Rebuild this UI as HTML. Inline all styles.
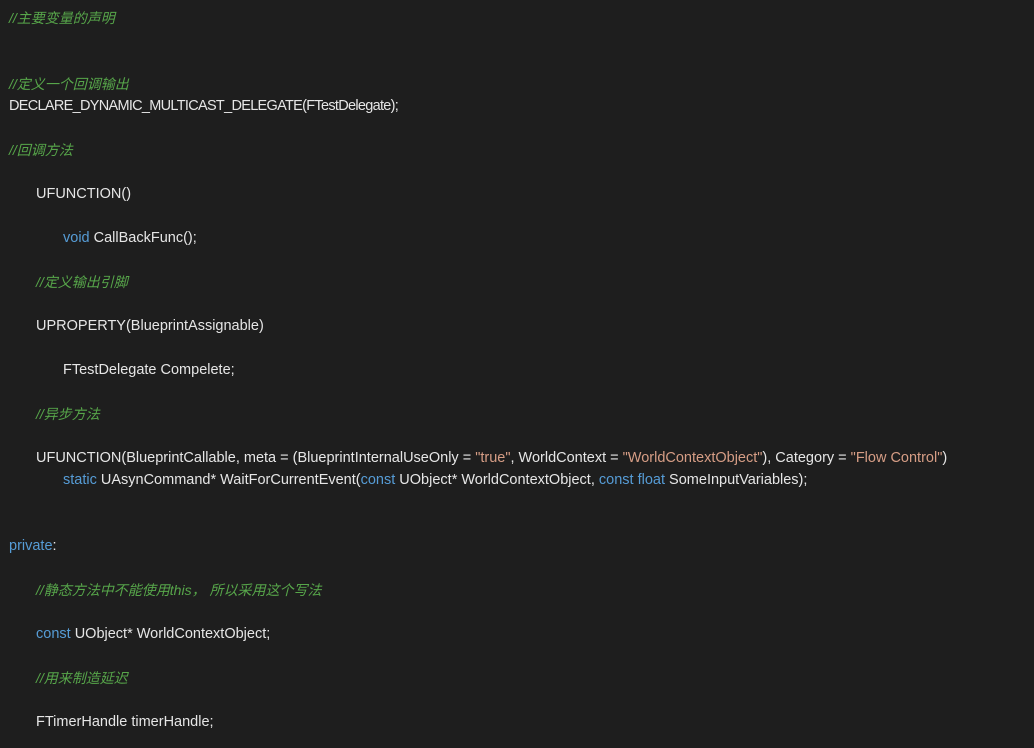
<!DOCTYPE html>
<html><head><meta charset="utf-8"><style>
html,body{margin:0;padding:0;background:#1e1e1e;width:1034px;height:748px;overflow:hidden}
.w{padding:7px 0 0 9px;font-family:"Liberation Sans","Noto Sans CJK SC",sans-serif;font-size:14.5px;color:#e6e6e6}
.w div{height:22px;line-height:22px;overflow:visible;white-space:pre}
.c{color:#57a64a;font-style:italic;font-size:14px}
.k{color:#569cd6}
.s{color:#d69d85}
.i1{padding-left:27px}
.i2{padding-left:54px}
.u{letter-spacing:-0.7px}
</style></head><body><div class="w">
<div><span class="c">//主要变量的声明</span></div>
<div></div>
<div></div>
<div><span class="c">//定义一个回调输出</span></div>
<div class="u">DECLARE_DYNAMIC_MULTICAST_DELEGATE(FTestDelegate);</div>
<div></div>
<div><span class="c">//回调方法</span></div>
<div></div>
<div class="i1">UFUNCTION()</div>
<div></div>
<div class="i2"><span class="k">void</span> CallBackFunc();</div>
<div></div>
<div class="i1"><span class="c">//定义输出引脚</span></div>
<div></div>
<div class="i1">UPROPERTY(BlueprintAssignable)</div>
<div></div>
<div class="i2">FTestDelegate Compelete;</div>
<div></div>
<div class="i1"><span class="c">//异步方法</span></div>
<div></div>
<div class="i1">UFUNCTION(BlueprintCallable, meta = (BlueprintInternalUseOnly = <span class="s">"true"</span>, WorldContext = <span class="s">"WorldContextObject"</span>), Category = <span class="s">"Flow Control"</span>)</div>
<div class="i2"><span class="k">static</span> UAsynCommand* WaitForCurrentEvent(<span class="k">const</span> UObject* WorldContextObject, <span class="k">const</span> <span class="k">float</span> SomeInputVariables);</div>
<div></div>
<div></div>
<div><span class="k">private</span>:</div>
<div></div>
<div class="i1"><span class="c">//静态方法中不能使用this， 所以采用这个写法</span></div>
<div></div>
<div class="i1"><span class="k">const</span> UObject* WorldContextObject;</div>
<div></div>
<div class="i1"><span class="c">//用来制造延迟</span></div>
<div></div>
<div class="i1">FTimerHandle timerHandle;</div>
</div></body></html>
